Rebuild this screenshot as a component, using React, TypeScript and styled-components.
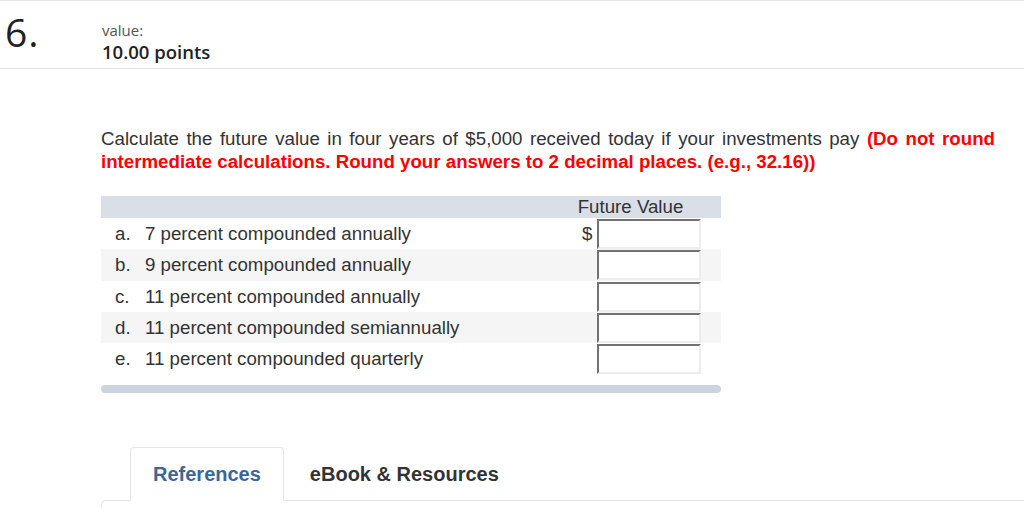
import React from "react";
import styled, { createGlobalStyle } from "styled-components";

const Global = createGlobalStyle`
  html, body { margin: 0; padding: 0; background: #fff; }
  body { font-family: "Liberation Sans", Arial, sans-serif; color: #333; }
  * { box-sizing: border-box; }
`;

const Page = styled.div`
  width: 1024px;
  height: 508px;
  overflow: hidden;
  border-top: 1px solid #e8e8e8;
`;

const Header = styled.header`
  display: flex;
  align-items: flex-start;
  height: 68px;
  border-bottom: 1px solid #e4e4e4;
`;

const QNum = styled.div`
  width: 102px;
  padding: 9px 0 0 5px;
  font-family: "Open Sans", sans-serif;
  font-size: 39px;
  line-height: 44px;
  letter-spacing: 1px;
  color: #222;
`;

const ValueBlock = styled.div`
  display: flex;
  flex-direction: column;
  padding-top: 20px;
  font-family: "Open Sans", sans-serif;
`;

const ValueLabel = styled.span`
  font-size: 15px;
  line-height: 19px;
  color: #555;
`;

const Points = styled.span`
  font-size: 18.5px;
  line-height: 24px;
  font-weight: 600;
  color: #222;
`;

const Main = styled.main`
  padding: 58px 29px 0 101px;
`;

const Question = styled.p`
  margin: 0;
  font-size: 18.7px;
  line-height: 23px;
  text-align: justify;
  color: #333;
`;

const Note = styled.strong`
  color: #f00;
`;

const Table = styled.div`
  margin-top: 23px;
  width: 620px;
  font-size: 18.7px;
  color: #333;
`;

const Row = styled.div<{ $alt?: boolean; $head?: boolean; $h: number }>`
  display: grid;
  grid-template-columns: 44px 1fr 21px 104px 20px;
  align-items: center;
  height: ${(p) => p.$h}px;
  background: ${(p) => (p.$head ? "#d9dee7" : p.$alt ? "#f5f5f5" : "#fff")};
`;

const Letter = styled.span`
  padding-left: 14px;
`;

const HeadCell = styled.span`
  grid-column: 3 / span 2;
  text-align: center;
  padding-right: 16px;
  line-height: 22px;
  white-space: nowrap;
`;

const Dollar = styled.span`
  padding-left: 6px;
`;

const Field = styled.input`
  grid-column: 4;
  width: 104px;
  height: 30px;
  margin: 0;
  padding: 0 4px;
  border-top: 2px solid #727272;
  border-left: 2px solid #727272;
  border-right: 2px solid #ededed;
  border-bottom: 2px solid #ededed;
  background: #fff;
  font: inherit;
  outline: none;
`;

const Bar = styled.div`
  margin-top: 10px;
  width: 620px;
  height: 8px;
  border-radius: 4px;
  background: #cdd4df;
`;

const TabsArea = styled.div`
  margin: 54px -40px 0 0;
`;

const TabList = styled.div`
  display: flex;
  padding-left: 29px;
`;

const Tab = styled.div<{ $active?: boolean }>`
  position: relative;
  z-index: 1;
  height: 54px;
  margin-bottom: -1px;
  padding: 0 ${(p) => (p.$active ? "22px" : "25px")};
  display: flex;
  align-items: center;
  font-size: 20px;
  font-weight: 700;
  color: ${(p) => (p.$active ? "#3b6698" : "#333")};
  border: 1px solid ${(p) => (p.$active ? "#e6e6e6" : "transparent")};
  border-bottom: 1px solid ${(p) => (p.$active ? "#fff" : "transparent")};
  background: ${(p) => (p.$active ? "#fff" : "transparent")};
  border-radius: 4px 4px 0 0;
`;

const Panel = styled.div`
  height: 30px;
  border-top: 1px solid #e6e6e6;
  border-left: 1px solid #e6e6e6;
  border-radius: 5px 0 0 0;
`;

const rows = [
  { l: "a.", t: "7 percent compounded annually", h: 31 },
  { l: "b.", t: "9 percent compounded annually", h: 32 },
  { l: "c.", t: "11 percent compounded annually", h: 31 },
  { l: "d.", t: "11 percent compounded semiannually", h: 31 },
  { l: "e.", t: "11 percent compounded quarterly", h: 32 },
];

export default function App() {
  return (
    <Page>
      <Global />
      <Header>
        <QNum>6.</QNum>
        <ValueBlock>
          <ValueLabel>value:</ValueLabel>
          <Points>10.00 points</Points>
        </ValueBlock>
      </Header>
      <Main>
        <Question>
          Calculate the future value in four years of $5,000 received today if your investments pay{" "}
          <Note>
            (Do not round intermediate calculations. Round your answers to 2 decimal places. (e.g., 32.16))
          </Note>
        </Question>
        <Table>
          <Row $head $h={22}>
            <HeadCell>Future Value</HeadCell>
          </Row>
          {rows.map((r, i) => (
            <Row key={r.l} $alt={i % 2 === 1} $h={r.h}>
              <Letter>{r.l}</Letter>
              <span>{r.t}</span>
              <Dollar>{i === 0 ? "$" : ""}</Dollar>
              <Field type="text" aria-label={`Future value ${r.l}`} />
            </Row>
          ))}
        </Table>
        <Bar />
        <TabsArea>
          <TabList>
            <Tab $active>References</Tab>
            <Tab>eBook &amp; Resources</Tab>
          </TabList>
          <Panel />
        </TabsArea>
      </Main>
    </Page>
  );
}
